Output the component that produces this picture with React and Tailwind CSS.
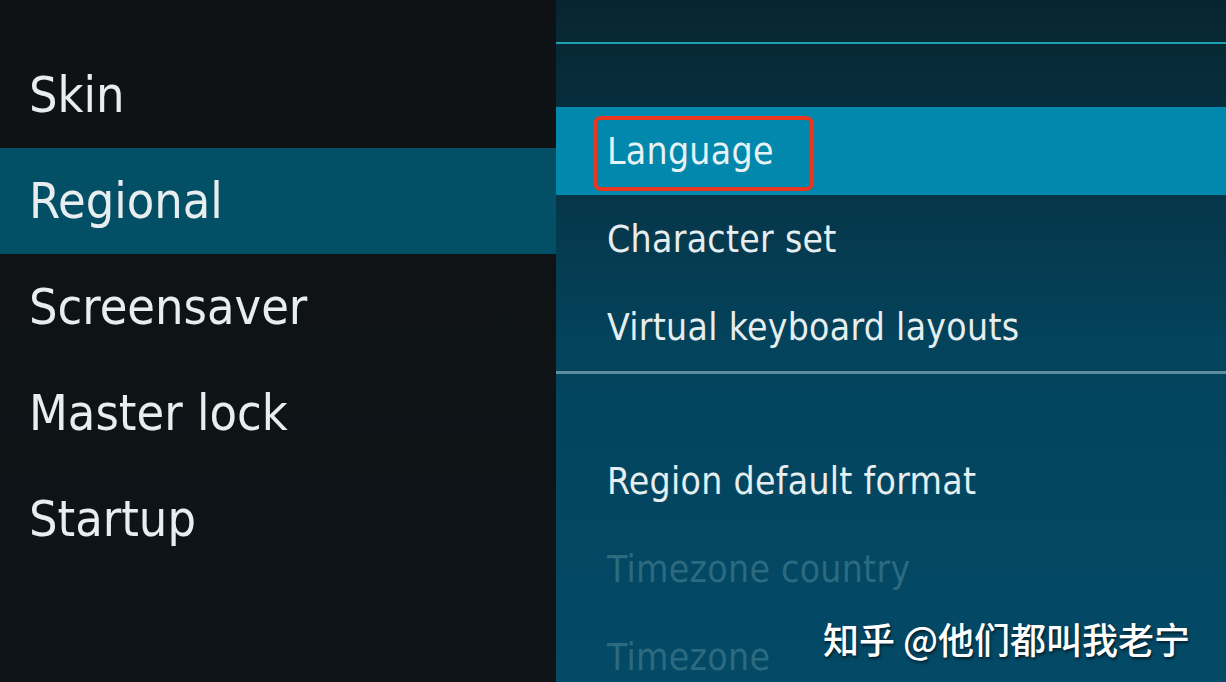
const leftItems = ["Skin", "Regional", "Screensaver", "Master lock", "Startup"];

const font = { fontFamily: '"DejaVu Sans Condensed", "DejaVu Sans", sans-serif' };

function RightRow({ children, dim }) {
  return (
    <div
      className={`h-[88px] flex items-center pl-[51px] text-[37px] tracking-[0.3px] leading-none ${dim ? "text-[#2c6a80]" : "text-[#e6eef0]"}`}
    >
      {children}
    </div>
  );
}

export default function App() {
  return (
    <div
      className="relative flex h-[682px] w-[1226px] overflow-hidden [font-stretch:condensed]"
      style={font}
    >
      <div className="w-[556px] shrink-0 bg-gradient-to-b from-[#0f1214] to-[#0e1418] pt-[42px]">
        {leftItems.map((item) => (
          <div
            key={item}
            className={`h-[106px] flex items-center pl-[29px] text-[50px] leading-none text-[#e8eef0] ${item === "Regional" ? "bg-[#034f66]" : ""}`}
          >
            {item}
          </div>
        ))}
      </div>

      <div className="flex-1 bg-gradient-to-b from-[#072530] via-[#03435c] to-[#034a67] pt-[42px]">
        <div className="h-[2px] bg-[#1f9fb2]" />
        <div className="h-[63px]" />

        <div className="h-[88px] flex items-center pl-[37px] bg-[#0288ad] text-[37px] tracking-[0.3px] leading-none text-[#e6f2f5]">
          <span className="mt-[5px] h-[75px] flex items-center pb-[5px] pl-[10px] pr-[36px] border-[4px] border-[#e8361f] rounded-[8px]">
            Language
          </span>
        </div>
        <RightRow>Character set</RightRow>
        <RightRow>Virtual keyboard layouts</RightRow>
        <div className="h-[3px] bg-[#5e8d9d]" />
        <div className="h-[63px]" />
        <RightRow>Region default format</RightRow>
        <RightRow dim>Timezone country</RightRow>
        <RightRow dim>Timezone</RightRow>
      </div>

      <div
        className="absolute right-[36px] bottom-[26px] text-[36px] leading-none font-medium text-white [text-shadow:1px_2px_3px_rgba(0,0,0,0.6)]"
        style={{ fontFamily: '"Noto Sans CJK SC", "Noto Sans", sans-serif', fontStretch: "normal" }}
      >
        知乎 @他们都叫我老宁
      </div>
    </div>
  );
}
